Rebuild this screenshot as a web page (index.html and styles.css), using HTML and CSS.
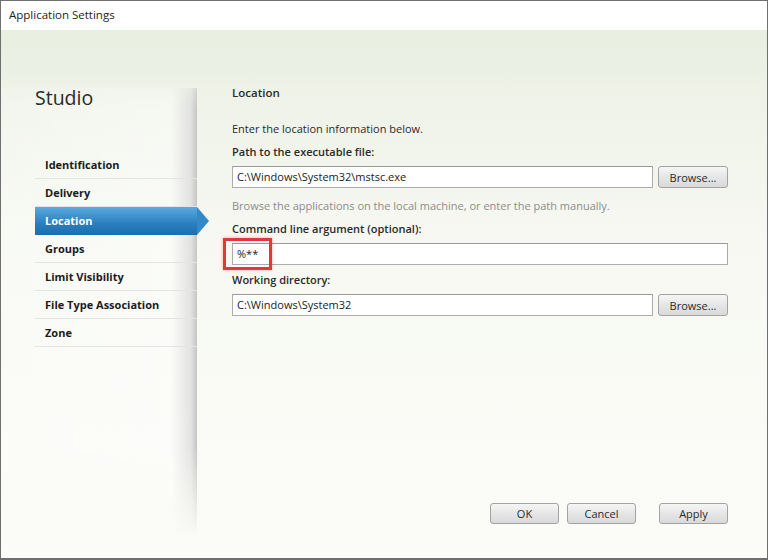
FILE: index.html
```
<!DOCTYPE html>
<html>
	<head>
		<meta charset="utf-8" />
		<title>Application Settings</title>
		<link rel="stylesheet" href="styles.css">
	</head>
	<body>
		<div class="window">
			<div class="titlebar">Application Settings</div>

			<div class="main">
				<div class="sidebar">
					<div class="panel">
						<h1>Studio</h1>
						<ul class="nav">
							<li>Identification</li>
							<li>Delivery</li>
							<li class="on">Location</li>
							<li>Groups</li>
							<li>Limit Visibility</li>
							<li>File Type Association</li>
							<li>Zone</li>
						</ul>
					</div>
				</div>

				<div class="content">
					<h2>Location</h2>
					<p class="intro">Enter the location information below.</p>

					<label>Path to the executable file:</label>
					<div class="row">
						<div class="field">C:\Windows\System32\mstsc.exe</div>
						<button class="btn">Browse...</button>
					</div>
					<p class="hint">Browse the applications on the local machine, or enter the path manually.</p>

					<label>Command line argument (optional):</label>
					<div class="row mark">
						<div class="field">%**</div>
						<span class="redbox"></span>
					</div>

					<label>Working directory:</label>
					<div class="row">
						<div class="field">C:\Windows\System32</div>
						<button class="btn">Browse...</button>
					</div>

					<div class="footer">
						<button class="btn">OK</button>
						<button class="btn">Cancel</button>
						<button class="btn apply">Apply</button>
					</div>
				</div>
			</div>
		</div>
	</body>
</html>
```

FILE: styles.css
```
*{
	margin: 0;
	padding: 0;
	box-sizing: border-box;
}
body{
	font-family: "Open Sans", "Noto Sans", sans-serif;
	font-size: 11px;
	color: #2b2b2b;
	background: #fff;
}
.window{
	width: 768px;
	height: 560px;
	border: 1px solid #6f6f6f;
	border-bottom-width: 2px;
	display: flex;
	flex-direction: column;
	background: #fff;
}
.titlebar{
	height: 29px;
	line-height: 28px;
	padding-left: 8px;
	font-size: 11.5px;
	color: #1e1e1e;
	background: #fff;
}
.main{
	flex: 1;
	display: flex;
	background: linear-gradient(#e8eee0 0, #eef2e7 60px, #f6f8f1 200px, #fafbf6 400px, #fbfcf7 100%);
}

/* left column */
.sidebar{
	width: 196px;
	padding-top: 58px;
}
.panel{
	height: 449px;
	padding-left: 34px;
	position: relative;
	z-index: 0;
}
.panel:before{
	content: "";
	position: absolute;
	left: 0;
	top: 0;
	right: 0;
	bottom: 0;
	z-index: -1;
	background: linear-gradient(to right, rgba(255,255,255,0.25) 0, rgba(255,255,255,0.45) 170px, rgba(220,220,220,0.8) 190px, #c4c4c4 196px);
	-webkit-mask-image: linear-gradient(rgba(0,0,0,0.6) 0, #000 20px, #000 80%, transparent 100%);
	mask-image: linear-gradient(rgba(0,0,0,0.6) 0, #000 20px, #000 80%, transparent 100%);
}
.panel h1{
	font-size: 19.5px;
	font-weight: normal;
	line-height: 20px;
	color: #2a2a2a;
	height: 63px;
}
.nav li{
	list-style: none;
	height: 28px;
	line-height: 27px;
	padding-left: 10px;
	font-weight: 700;
	color: #1c1c1c;
	border-bottom: 1px solid #e4e4e4;
	position: relative;
}
.nav .on{
	color: #fff;
	background: linear-gradient(#5aaae0, #2a80bf 60%, #1c6fae);
	border-bottom-color: #1c6fae;
}
.nav .on:after{
	content: "";
	position: absolute;
	right: -12px;
	top: 0;
	border-top: 14px solid transparent;
	border-bottom: 14px solid transparent;
	border-left: 12px solid #3389c6;
}

/* right column */
.content{
	flex: 1;
	display: flex;
	flex-direction: column;
	padding: 55px 39px 34px 35px;
	line-height: 16px;
}
.content h2{
	font-size: 11.5px;
	font-weight: 600;
	color: #2a2a2a;
}
.intro{
	margin-top: 20px;
}
label{
	display: block;
	margin-top: 7px;
	font-weight: 600;
	color: #2a2a2a;
}
.row{
	display: flex;
	gap: 5px;
	margin-top: 6px;
	height: 22px;
}
.mark{
	position: relative;
}
.field{
	flex: 1;
	height: 22px;
	line-height: 20px;
	padding-left: 4px;
	background: #fff;
	border: 1px solid #acacac;
	border-top-color: #9a9a9a;
	color: #222;
}
.btn{
	width: 70px;
	height: 22px;
	font-family: inherit;
	font-size: 11px;
	color: #2b2b2b;
	border: 1px solid #a3a3a3;
	border-radius: 3px;
	background: linear-gradient(#f6f6f6, #e6e6e6 50%, #d9d9d9);
}
.hint{
	margin-top: 10px;
	color: #8c8c8c;
}
.redbox{
	position: absolute;
	left: -9px;
	top: -5px;
	width: 49px;
	height: 32px;
	border: 3px solid #e2383c;
	box-shadow: 0 0 3px rgba(226,56,60,0.4);
}
.footer{
	margin-top: auto;
	display: flex;
	justify-content: flex-end;
}
.footer .btn{
	width: 69px;
	height: 21px;
	margin-left: 8px;
}
.footer .apply{
	margin-left: 23px;
}
```
